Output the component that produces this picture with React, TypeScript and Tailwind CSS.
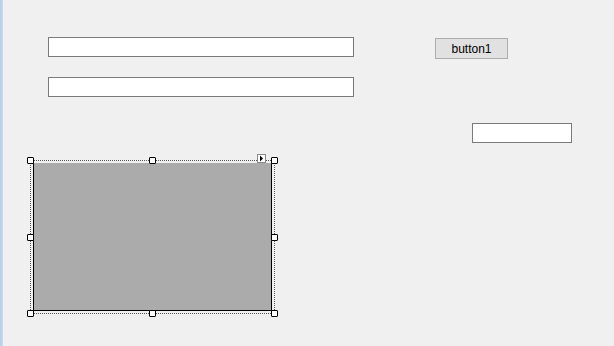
import React from 'react';

// grab handles around the selected panel, relative to the selection frame
const handles: { x: number; y: number }[] = [
  { x: 0, y: 0 }, { x: 122, y: 0 }, { x: 244, y: 0 },
  { x: 0, y: 77 }, { x: 244, y: 77 },
  { x: 0, y: 153 }, { x: 122, y: 153 }, { x: 244, y: 153 },
];

const TextBox: React.FC<{ className?: string }> = ({ className = '' }) => (
  <div className={`bg-white border border-[#7a7a7a] h-[20px] shrink-0 ${className}`} />
);

const App: React.FC = () => {
  return (
    <div className="flex w-[614px] h-[346px] bg-[#f0f0f0] overflow-hidden" style={{ fontFamily: '"Liberation Sans", Arial, sans-serif' }}>
      <div className="w-[3px] h-full bg-gradient-to-r from-[#b4cdea] to-[#cbdcf0]" />
      <div className="flex-1 flex flex-col pt-[37px]">
        <div className="flex items-start pl-[45px]">
          <TextBox className="w-[306px]" />
          <button className="ml-[81px] mt-[1px] w-[73px] h-[21px] bg-[#e1e1e1] border border-[#adadad] text-[12px] text-black flex items-center justify-center leading-none">
            button1
          </button>
        </div>

        <div className="flex pl-[45px] mt-[18px]">
          <TextBox className="w-[306px]" />
        </div>

        <div className="flex pl-[469px] mt-[26px]">
          <TextBox className="w-[100px]" />
        </div>

        {/* selected panel */}
        <div className="relative ml-[27px] mt-[17px] w-[245px] h-[154px] p-[2px] border border-dotted border-[#555]">
          <div className="w-full h-full bg-[#ababab] border-l border-r border-b border-black" />
          {handles.map((h, i) => (
            <div
              key={i}
              className="absolute w-[7px] h-[7px] bg-white border border-black rounded-[1px]"
              style={{ left: h.x - 4, top: h.y - 4 }}
            />
          ))}
          {/* smart tag */}
          <div className="absolute left-[226px] top-[-7px] w-[9px] h-[9px] bg-white border border-[#8a8a8a] flex items-center justify-center">
            <svg width="5" height="7" viewBox="0 0 5 7">
              <path d="M1 0.5 L4 3.5 L1 6.5 Z" fill="#000" />
            </svg>
          </div>
        </div>
      </div>
    </div>
  );
};

export default App;
